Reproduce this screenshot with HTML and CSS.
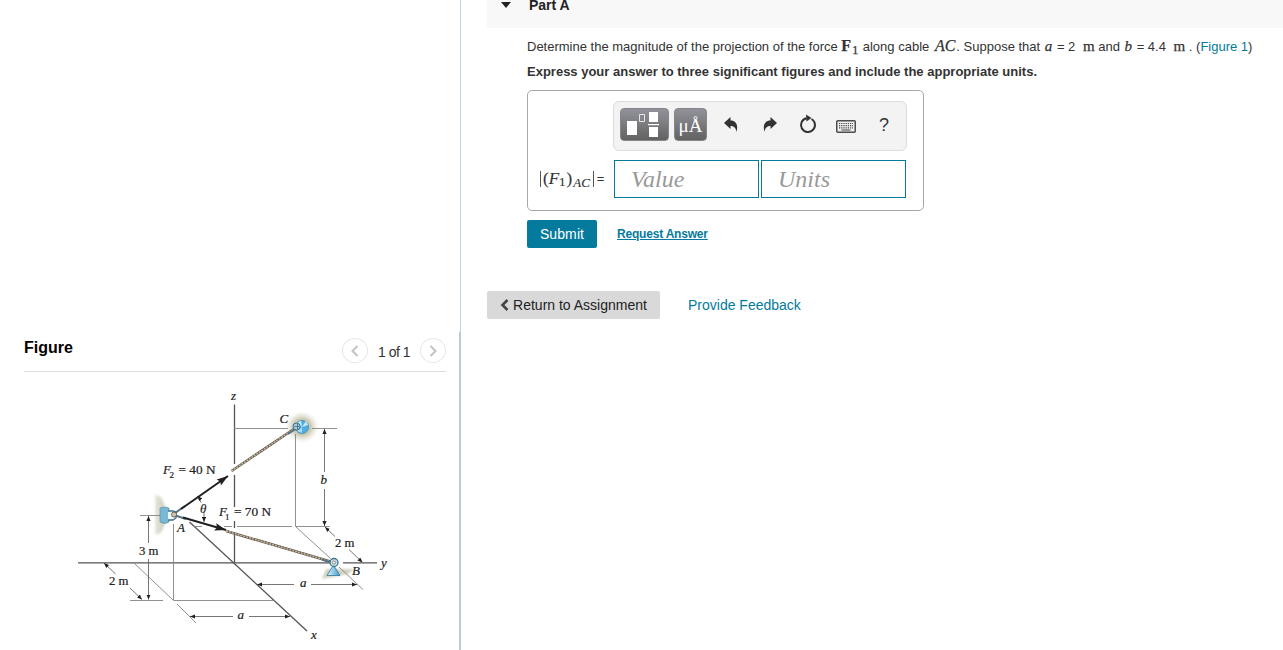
FILE: index.html
```html
<!DOCTYPE html>
<html lang="en">
<head>
<meta charset="utf-8">
<title>Part A</title>
<link rel="stylesheet" href="styles.css">
</head>
<body>
<div class="app">
  <aside class="side">
    <div class="side-top"></div>
    <section class="figure-pane">
      <header class="figure-head">
        <h2>Figure</h2>
        <nav class="pager">
          <button class="round" aria-label="Previous"><svg width="24" height="24" viewBox="0 0 24 24"><path d="M14.500 7 9.500 12l5 5"/></svg></button>
          <span class="count">1 of 1</span>
          <button class="round" aria-label="Next"><svg width="24" height="24" viewBox="0 0 24 24"><path d="M9.500 7l5 5-5 5"/></svg></button>
        </nav>
      </header>
      <svg class="diagram" width="330" height="265" viewBox="70 385 330 265">
        <defs>
          <radialGradient id="glow"><stop offset=".5" stop-color="#c9c8b2"/><stop offset="1" stop-color="#e7e6da" stop-opacity="0"/></radialGradient>
          <linearGradient id="wall" x1="0" x2="1"><stop offset="0" stop-color="#e9e8df"/><stop offset="1" stop-color="#c9c8b6"/></linearGradient>
          <linearGradient id="pin" x1="0" x2="1"><stop offset="0" stop-color="#e2f4fc"/><stop offset="1" stop-color="#3a9fd4"/></linearGradient>
          <filter id="soft" x="-30%" y="-30%" width="160%" height="160%"><feGaussianBlur stdDeviation="1.3"/></filter>
          <marker id="tip" viewBox="0 0 6 5" refX="6" refY="2.5" markerWidth="5" markerHeight="4.2" markerUnits="userSpaceOnUse" orient="auto"><path d="M0 0 6 2.500 0 5z" fill="#231f20"/></marker>
          <marker id="force" viewBox="0 0 12 8" refX="12" refY="4" markerWidth="12" markerHeight="7.5" markerUnits="userSpaceOnUse" orient="auto"><path d="M0 0 12 4 0 8 2 4z" fill="#231f20"/></marker>
        </defs>
        <path d="M155 495q5-1 8 6 3 7 3 14t-3 14q-3 7-8 5z" fill="url(#wall)" filter="url(#soft)"/>
        <ellipse cx="302" cy="427" rx="17" ry="16" fill="url(#glow)"/>
        <path d="M326 569h28l-6 5-26 5z" fill="#d2d1c2" filter="url(#soft)"/>
        <g class="axis">
          <path d="M234.500 404.500V464M234.500 475v32M234.500 521v7M234.500 532v31"/>
          <path d="M78 562.800h253M343 562.800h34"/>
          <path d="M189.500 522 307 631"/>
        </g>
        <g class="thin">
          <path d="M234 428.500h54M312 428.500h25"/>
          <path d="M295.500 434v92.500l35 32"/>
          <path d="M194 526.500h8M224 526.500h8M237 526.500h55M296 526.500h34"/>
          <path d="M173.500 524v76.500h101M134 563l39 37"/>
          <path d="M140 515.500h22M130 600.500h33"/>
          <path d="M177 604l19 19M339 567l24 22.500"/>
        </g>
        <g class="dim">
          <path d="M324.500 472V429"/>
          <path d="M324.500 489v37"/>
          <path d="M335 536.500 325 527"/>
          <path d="M349 549.500l13.500 13"/>
          <path d="M148.500 543V516"/>
          <path d="M148.500 559v40.500"/>
          <path d="M115.500 574 104 563"/>
          <path d="M130 588l12 11.500"/>
          <path d="M294 584.500h-37"/>
          <path d="M311 584.500h46"/>
          <path d="M233 616.500h-43"/>
          <path d="M249 616.500h41"/>
          <path d="M201 502.500Q200 499 197.500 496"/>
          <path d="M204 512v10"/>
        </g>
        <path class="rope-edge" d="M231.500 471 297 427M226 531l106 31"/>
        <path class="rope" d="M231.500 471 297 427M226 531l106 31"/>
        <path class="link" d="M288 434l9-6M322 559.500l9 3M175 513l10-7M174 515l12 4"/>
        <path class="force" d="M181 509l47-33"/>
        <path class="force" d="M183 517.500l43 12.500"/>
        <path d="M160 508q5-2 9 0v14q-4 3-9 0z" fill="#78b9d5" stroke="#56899d" stroke-width=".6"/>
        <path d="M168 511h5l3 1v6l-3 2h-5" fill="#eff8fb" stroke="#426f87" stroke-width="1.300"/>
        <circle cx="174" cy="514.500" r="2.500" fill="#d5c9ad" stroke="#4b4b46" stroke-width=".8"/>
        <circle cx="302" cy="427" r="6.500" fill="#50afe2" stroke="#3886b0" stroke-width=".8"/>
        <path d="M302 427l-5-4 4-2.500zM302 427l6-2-2-4z" fill="#c8e9f9"/><path d="M302 427l-5 4 5 2z" fill="#a9daf2"/>
        <circle cx="296.500" cy="426.500" r="3.500" fill="#aed0df" stroke="#356c84"/>
        <path d="M294 426.500h5M297.500 423.500v6" stroke="#356c84" stroke-width=".8"/>
        <path d="M333.500 565 327 575.500h13z" fill="url(#pin)" stroke="#337494" stroke-width=".8"/>
        <circle cx="334" cy="562.500" r="4" fill="#cae7f2" stroke="#3a7591" stroke-width="1.300"/>
        <circle cx="334" cy="562.500" r="1.700" fill="#eee5d2" stroke="#665f50" stroke-width=".6"/>
        <g class="labels">
          <text class="it" x="231" y="400">z</text>
          <text class="it" x="279.500" y="423">C</text>
          <text class="it" x="320.500" y="484">b</text>
          <text class="it" x="163" y="474">F</text><text class="sub" x="169.500" y="477.500">2</text><text x="178.500" y="474" textLength="37" lengthAdjust="spacingAndGlyphs">= 40 N</text>
          <text class="it" x="219" y="516">F</text><text class="sub" x="225" y="519.500">1</text><text x="234" y="516" textLength="37" lengthAdjust="spacingAndGlyphs">= 70 N</text>
          <text class="it" x="200" y="513">θ</text>
          <text class="it" x="177" y="532">A</text>
          <text x="139" y="555" textLength="19.500" lengthAdjust="spacingAndGlyphs">3 m</text>
          <text x="109" y="585" textLength="19.500" lengthAdjust="spacingAndGlyphs">2 m</text>
          <text x="335" y="547" textLength="19.500" lengthAdjust="spacingAndGlyphs">2 m</text>
          <text class="it" x="352" y="575">B</text>
          <text class="it" x="381" y="567">y</text>
          <text class="it" x="300" y="587">a</text>
          <text class="it" x="237.500" y="619">a</text>
          <text class="it" x="311" y="639">x</text>
        </g>
      </svg>
    </section>
  </aside>
  <main class="main">
    <header class="part"><span class="caret"></span><h1>Part A</h1></header>
    <div class="body">
      <p class="prompt">Determine the magnitude of the projection of the force <b class="math">F</b><span class="math s1">1</span> along cable <i class="math ac">AC</i>. Suppose that <i class="math var">a</i> = 2 <span class="math m">m</span> and <i class="math var">b</i> = 4.4 <span class="math m">m</span> . (<a href="#">Figure 1</a>)</p>
      <p class="instruct">Express your answer to three significant figures and include the appropriate units.</p>
      <div class="answer">
        <div class="tools">
          <button class="tile wide" aria-label="Templates"><svg width="49" height="33" viewBox="0 0 49 33"><path d="M7 13h10v14H7zM29 4h9v10h-9zM29 19h9v10h-9zM28 16h11v1.300H28z" fill="#fff"/><path d="M19.500 6.500h5v7h-5z" fill="none" stroke="#e6e6ec"/></svg></button>
          <button class="tile">μÅ</button>
          <svg class="undo" width="14" height="16" viewBox="0 0 14 16"><path d="M0 6 6.500 0v3.500c5.500 0 8 4.500 6 11.500-.5-3.500-2-6-6-6V12z" fill="#333"/></svg>
          <svg class="redo" width="14" height="16" viewBox="0 0 14 16"><path d="M14 6 7.500 0v3.500c-5.500 0-8 4.500-6 11.500.5-3.500 2-6 6-6V12z" fill="#333"/></svg>
          <svg class="reset" width="18" height="20" viewBox="0 0 18 20"><path d="M12.500 5A7 7 0 1 1 7.500 4.200" fill="none" stroke="#333" stroke-width="2"/><path d="M7 .5l5.500 3.500L7.500 7.500z" fill="#333"/></svg>
          <svg class="keys" width="20" height="13" viewBox="0 0 20 13"><rect x=".75" y=".75" width="18.500" height="11.500" rx="1" fill="#eee" stroke="#4d4d4d" stroke-width="1.500"/><path d="M3 3.500h14M3 5.700h14M3 7.900h14" stroke="#444" stroke-width="1.200" stroke-dasharray="1.200 1"/><path d="M5.500 10h9" stroke="#444"/></svg>
          <span class="help">?</span>
        </div>
        <div class="entry">
          <span class="label"><span class="bar"></span><span class="math">(<i>F</i><span class="sm">1</span>)<i class="sb">AC</i></span><span class="bar end"></span><span class="eq">=</span></span>
          <input class="field" placeholder="Value" aria-label="Value">
          <input class="field" placeholder="Units" aria-label="Units">
        </div>
      </div>
      <div class="actions"><button class="submit">Submit</button><a class="request" href="#">Request Answer</a></div>
    </div>
    <footer class="foot">
      <button class="return"><svg width="9" height="12" viewBox="0 0 9 12"><path d="M7.500 1 2.500 6l5 5" fill="none" stroke="#444" stroke-width="2.600"/></svg><span>Return to Assignment</span></button>
      <a href="#">Provide Feedback</a>
    </footer>
  </main>
</div>
</body>
</html>
```
FILE: styles.css
```css
* { box-sizing: border-box; }
body { margin: 0; background: #fff; color: #333; font: 13px/16px "Liberation Sans", Arial, sans-serif; }
h1, h2, p { margin: 0; }
button { padding: 0; border: 0; font-family: inherit; }
a { color: #047a9c; text-decoration: none; }
.app { display: flex; height: 650px; overflow: hidden; }
.side { width: 461px; flex: none; display: flex; flex-direction: column; }
.side-top { height: 332px; border-right: 1px solid #c3d0dd; }
.figure-pane { flex: 1; border-right: 2px solid #b8cadd; padding-right: 13px; padding-left: 24px; }
.figure-head { height: 40px; display: flex; justify-content: space-between; border-bottom: 1px solid #ddd; }
.figure-head h2 { color: #000; font-size: 16px; line-height: 18px; padding-top: 7px; }
.pager { display: flex; padding-top: 6px; }
.round { width: 26px; height: 25px; border: 1px solid #e6e6e6; border-radius: 50%; background: #fff; display: flex; align-items: center; justify-content: center; }
.round svg { fill: none; stroke: #c3c3c3; stroke-width: 2; flex: none; }
.count { width: 52px; text-align: center; font-size: 14px; letter-spacing: -.5px; padding-top: 6px; }
.diagram { display: block; margin: 13px 0 0 46px; }
.axis { fill: none; stroke: #555; stroke-width: 1.3; }
.thin { fill: none; stroke: #858585; stroke-width: .9; }
.dim { fill: none; stroke: #666; stroke-width: .9; }
.dim path { marker-end: url(#tip); }
.rope-edge { fill: none; stroke: #625a51; stroke-width: 2.6; }
.rope { fill: none; stroke: #cbb79a; stroke-width: 1.5; stroke-dasharray: 2 1; }
.link { fill: none; stroke: #567481; stroke-width: 2; }
.force { fill: none; stroke: #231f20; stroke-width: 2; marker-end: url(#force); }
.labels { font: 12px "Liberation Serif", serif; fill: #222; stroke: #222; stroke-width: .2px; }
.labels .it { font-size: 13px; font-style: italic; }
.labels .sub { font-size: 9px; }
.main { flex: 1; padding-left: 26px; }
.part { height: 28px; background: #f8f8f8; display: flex; align-items: flex-start; }
.part h1 { font-size: 14px; line-height: 16px; margin: -3px 0 0 18px; color: #222; }
.caret { margin: 2px 0 0 14px; border: 5.5px solid transparent; border-top: 6px solid #222; border-bottom: 0; }
.body { padding-left: 40px; }
.prompt { height: 24px; margin-top: 10px; line-height: 18px; white-space: nowrap; }
.math { font-family: "Liberation Serif", serif; font-size: 16px; line-height: 16px; -webkit-text-stroke: .25px #333; }
.prompt .s1 { font-size: 12px; position: relative; top: 3px; margin: 0 1px; }
.prompt .ac { margin: 0 1px 0 2px; }
.prompt .var { font-size: 15px; margin: 0 1px; }
.prompt .m { font-size: 15px; margin-left: 4px; }
.instruct { margin-top: 2px; font-weight: 700; line-height: 16px; }
.answer { width: 397px; height: 121px; margin-top: 10px; border: 1px solid #a8a8a8; border-radius: 5px; padding: 10px 0 0 11px; }
.tools { width: 294px; height: 50px; margin-left: 74px; padding: 6px 6px; display: flex; align-items: flex-start; background: #f3f3f3; border: 1px solid #ddd; border-radius: 6px; }
.tile { width: 33px; height: 33px; border: 1px solid #85858a; border-radius: 4px; background: linear-gradient(#92929b, #626262); color: #fff; font: 19px/33px "Liberation Serif", serif; }
.wide { width: 49px; margin-right: 5px; }
.wide svg { display: block; margin: -1px; }
.undo { margin: 9px 0 0 17px; }
.redo { margin: 9px 0 0 25px; }
.reset { margin: 6px 0 0 22px; }
.keys { margin: 12px 0 0 19px; }
.help { margin: 7px 0 0 23px; font-size: 18px; line-height: 20px; }
.entry { display: flex; height: 38px; margin-top: 9px; }
.label { width: 75px; display: flex; align-items: center; }
.bar { width: 1px; height: 16px; margin: 0 2px 0 1px; background: #555; }
.bar.end { margin: 0 3px 0 3px; }
.label .math { font-size: 17px; white-space: nowrap; -webkit-text-stroke-width: .15px; }
.label .sm { font-size: 13px; position: relative; top: 2px; margin-right: 1px; }
.label .sb { font-size: 13px; position: relative; top: 3px; margin-left: 1px; }
.field { width: 145px; height: 38px; margin-right: 2px; padding: 0 16px; border: 1px solid #047a9c; border-radius: 0; background: #fff; font: italic 24px "Liberation Serif", serif; }
.field::placeholder { color: #999; opacity: 1; }
.actions { display: flex; margin-top: 9px; }
.submit { width: 70px; height: 28px; border-radius: 2px; background: #047a9c; color: #fff; font-size: 14px; letter-spacing: .1px; }
.request { margin: 6px 0 0 20px; font-size: 12px; letter-spacing: -.2px; font-weight: 700; text-decoration: underline; }
.foot { display: flex; align-items: center; margin-top: 43px; font-size: 14px; }
.return { width: 173px; height: 28px; border-radius: 2px; background: #d9d9d9; color: #222; font-size: 14px; display: flex; align-items: center; justify-content: center; gap: 4px; margin-right: 28px; }
```
